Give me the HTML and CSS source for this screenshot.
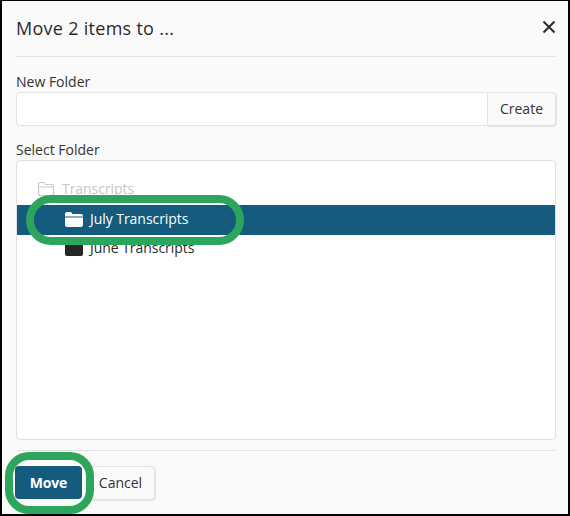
FILE: index.html
```html
<!DOCTYPE html>
<html lang="en">
<head>
<meta charset="utf-8">
<title>Move items</title>
<link rel="stylesheet" href="styles.css">
</head>
<body>
<div class="dialog">
  <header class="head">
    <h1 class="title">Move 2 items to ...</h1>
    <svg class="close" viewBox="0 0 14 14" width="14" height="14"><path d="M1.5 1.5 12.5 12.5M12.5 1.5 1.5 12.5" fill="none" stroke="#2b2b2b" stroke-width="2"/></svg>
  </header>
  <label class="label first">New Folder</label>
  <div class="input-group">
    <div class="input"></div>
    <button class="btn create">Create</button>
  </div>
  <label class="label second">Select Folder</label>
  <div class="tree">
    <div class="row root">
      <svg class="folder" viewBox="0 0 18 16" width="18" height="16"><path d="M1.5 3.500Q1.500 1.500 3.500 1.500H7L8.500 3.500H14.500Q16.500 3.500 16.500 5.500V12.500Q16.500 14.500 14.500 14.500H3.500Q1.500 14.500 1.500 12.500ZM1.500 6H16.500" fill="none" stroke="#c9c9c9" stroke-width="1.200"/></svg>
      <span>Transcripts</span>
    </div>
    <div class="row child selected">
      <svg class="folder" viewBox="0 0 18 16" width="18" height="16"><path d="M0 3Q0 1 2 1H6L7.500 3H16Q18 3 18 5V5.500H0ZM0 6.500H18V14Q18 16 16 16H2Q0 16 0 14Z" fill="#fff"/></svg>
      <span>July Transcripts</span>
    </div>
    <div class="row child last">
      <svg class="folder" viewBox="0 0 18 16" width="18" height="16"><path d="M0 3Q0 1 2 1H6L7.500 3H16Q18 3 18 5V14Q18 16 16 16H2Q0 16 0 14Z" fill="#262626"/></svg>
      <span>June Transcripts</span>
    </div>
  </div>
  <footer class="foot">
    <button class="btn primary">Move</button>
    <button class="btn cancel">Cancel</button>
  </footer>
  <div class="ring ring-row"></div>
  <div class="ring ring-move"></div>
</div>
</body>
</html>
```
FILE: styles.css
```css
* { box-sizing: border-box; }
html, body { margin: 0; padding: 0; }
body { width: 570px; height: 516px; overflow: hidden; font-family: "Open Sans", "Liberation Sans", sans-serif; color: #333; }
.dialog { position: relative; width: 570px; height: 516px; background: #fafafa; border: 2px solid #000; border-width: 1px 2px 2px 2px; padding: 0 12px 0 14px; }
.head { display: flex; justify-content: space-between; align-items: center; height: 56px; border-bottom: 1px solid #e2e2e2; padding-bottom: 1px; }
.title { margin: 0; font-size: 18px; font-weight: 500; letter-spacing: .28px; color: #2b2b2b; line-height: 24px; }
.close { margin-right: 0; margin-top: -2px; }
.label { display: block; font-size: 14px; line-height: 19px; color: #333; }
.first { margin-top: 15px; }
.second { margin-top: 14px; }
.input-group { display: flex; height: 34px; margin-top: 1px; }
.input { flex: 1; background: #fff; border: 1px solid #e4e4e4; border-right: 0; border-radius: 4px 0 0 4px; }
.btn { font-family: inherit; font-size: 14px; color: #333; background: #fafafa; border: 1px solid #e2e2e2; box-shadow: 1px 1px 1px #e4e4e4; border-radius: 0 4px 4px 0; padding: 0 0 2px; }
.create { width: 69px; }
.tree { height: 280px; margin-top: 1px; background: #fff; border: 1px solid #e0e0e0; border-radius: 4px; padding-top: 14px; }
.row { display: flex; align-items: center; height: 30px; font-size: 14px; letter-spacing: -.05px; padding-bottom: 3px; }
.row .folder { margin-right: 7px; flex: none; }
.root { color: #c6c6c6; padding-left: 20px; }
.child { padding-left: 48px; }
.selected { background: #145b7d; color: #fff; }
.last { margin-top: -2px; padding-bottom: 1px; color: #2b2b2b; }
.foot { display: flex; align-items: flex-start; height: 65px; margin-top: 10px; border-top: 1px solid #e2e2e2; padding-top: 15px; }
.primary { width: 67px; height: 33px; margin-left: -1px; padding: 0; background: #145b7d; border: 0; box-shadow: none; border-radius: 4px; color: #fff; font-weight: 700; letter-spacing: -.2px; }
.cancel { width: 73px; height: 34px; border-left: 0; background: #fafafa; padding-left: 5px; }
.ring { position: absolute; border: 8px solid #2ea55c; pointer-events: none; }
.ring-row { left: 24px; top: 194px; width: 218px; height: 50px; border-radius: 25px; }
.ring-move { left: 3px; top: 451px; width: 89px; height: 62px; border-radius: 24px; }
```
